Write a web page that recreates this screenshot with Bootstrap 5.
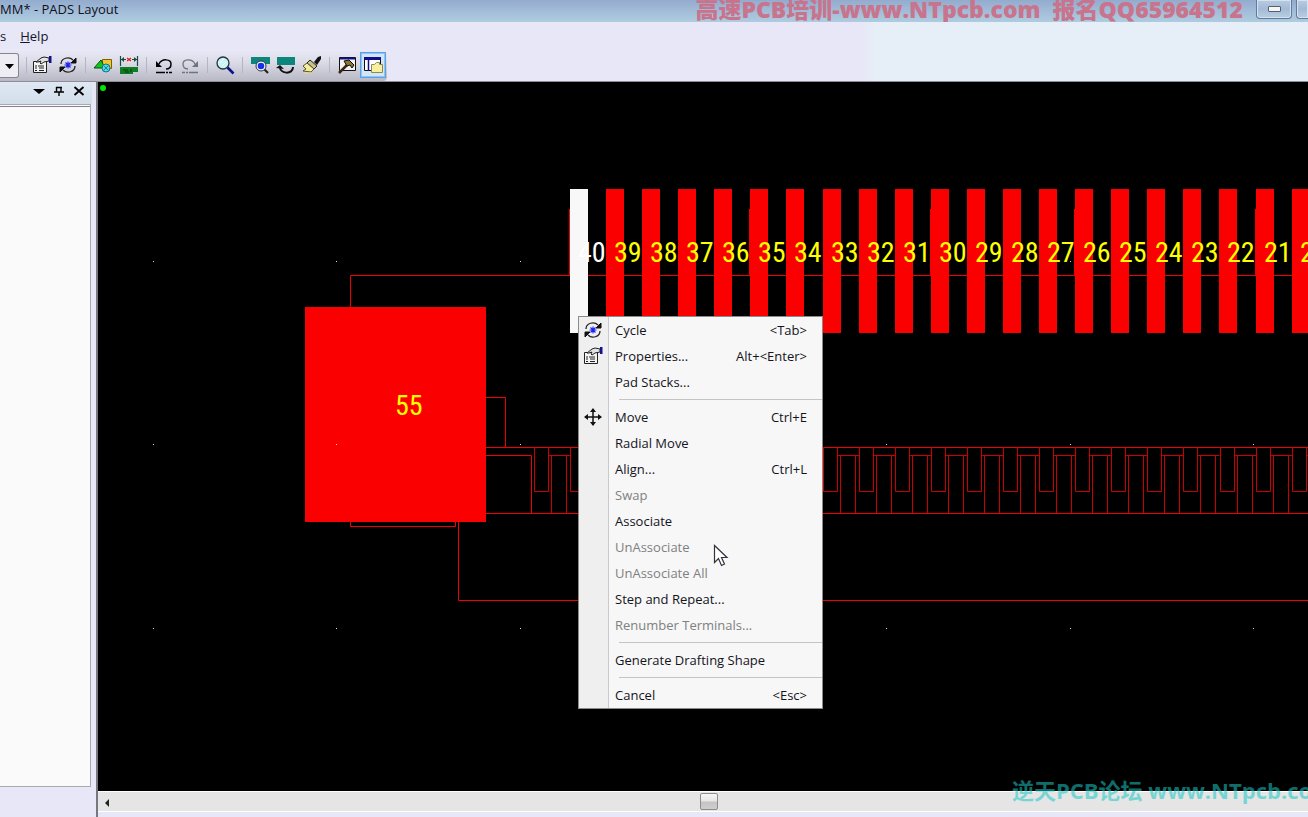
<!DOCTYPE html>
<html lang="en">
<head>
<meta charset="utf-8">
<meta name="viewport" content="width=device-width, initial-scale=1">
<title>PADS Layout</title>
<link href="https://cdn.jsdelivr.net/npm/bootstrap@5.3.0/dist/css/bootstrap.min.css" rel="stylesheet">
<style>
  :root { --chrome: #e8e7f7; --chrome-blue: #e6eff7; }
  body { font-family: "Open Sans", "Noto Sans CJK SC", sans-serif; font-size: 13px; line-height: 16px; color: #101020; background: var(--chrome); }
  .title-bar { height: 22px; background: linear-gradient(#93abcd, #a2bcd8 50%, #afccdf); }
  .title-text { line-height: 18px; }
  .promo { right: 65px; top: -6px; font: 800 23px/30px "Open Sans", "Noto Sans CJK SC", sans-serif; color: #c8748d; white-space: pre; }
  .win-btn { width: 36px; height: 19px; border: 1px solid #63799b; border-top: 0; border-radius: 0 0 4px 4px; background: linear-gradient(#b9cbe0, #a3bad5 50%, #b7cfe2); box-shadow: inset 0 0 0 1px #d5e2ef; }
  .win-next { width: 12px; border-right: 0; border-radius: 0 0 0 4px; }
  .win-btn span { width: 13px; height: 6px; border: 1px solid #555f6e; background: #f5f5f5; border-radius: 1px; }
  .top-chrome { background: linear-gradient(90deg, var(--chrome) 66%, var(--chrome-blue) 67%); border-bottom: 1px solid #8e8e98; }
  .menu-row { height: 27px; gap: 14px; }
  .menu-row a { color: #14142c; text-decoration: none; line-height: 28px; }
  .tool-row { height: 32px; width: 387px; background: linear-gradient(#ebeaf8, #dcdbe8 40%, #b9b9c6); border-radius: 0 0 4px 0; }
  .tool-row select { width: 19px; height: 25px; border: 1px solid #85858f; border-left: 0; border-radius: 0 3px 3px 0; appearance: none; color: transparent;
    background: #ededf3 url("data:image/svg+xml,%3Csvg xmlns='http://www.w3.org/2000/svg' width='9' height='5'%3E%3Cpath d='M0 0h9L4.500 5z'/%3E%3C/svg%3E") no-repeat 5px 10px; }
  .tool-btn { width: 26px; height: 26px; border: 1px solid transparent; background: none; }
  .tool-btn.on { border-color: #5aa2e6; background: #d3e6f8; box-shadow: inset 0 0 0 1px #8fc3f3; }
  .tool-sep { width: 1px; height: 16px; margin: 0 4px; background: #b4b4c2; }
  select + .tool-sep { margin: 0 2px 0 7px; }
  .tool-icon { width: 20px; height: 20px; display: block; }
  .dock { width: 92px; }
  .dock-head { height: 22px; gap: 6px; background: linear-gradient(#dfe8f4, #d3deeb); padding: 2px 5px 0 0; }
  .dock-head button { width: 14px; height: 14px; border: 0; background: none; }
  .dock-head svg { width: 12px; height: 12px; display: block; }
  .dock-body { background: #fafafa; border: 1px solid #a9a9b4; border-left: 0; box-shadow: inset 0 1px 0 #fafafa, inset 0 2px 0 #84848c; margin: 0 1px 30px 0; }
  .work { margin-left: 4px; border-left: 2px solid #77777f; }
  .board { background: #000; min-height: 0; }
  .board text { font: 28px "Liberation Sans Narrow", "Roboto Condensed", "Liberation Sans", sans-serif; fill: #ff0; }
  .scroll-row { height: 21px; background: #e5e5e5; border-top: 1px solid #fff; border-bottom: 1px solid #fff; }
  .scroll-row button { width: 18px; height: 19px; border: 0; background: none; }
  .scroll-thumb { left: calc(50% - 3px); width: 18px; height: 17px; top: 1px; border: 1px solid #8d8d8d; border-radius: 2px; background: linear-gradient(#f6f6f6, #e6e6e6 48%, #c4c4c4 52%, #cecece); }
  .forum { left: 914px; bottom: 12px; font: 700 22px/30px "Open Sans", "Noto Sans CJK SC", sans-serif; white-space: pre; }
  .forum span { color: #1cc8c4; opacity: .55; }
  .page-foot { height: 5px; }
  .ctx { left: 480px; top: 234px; width: 245px; padding: 0; border: 1px solid #8b8b8b; border-radius: 0; font-size: 13px;
    background: linear-gradient(90deg, #efefef 29px, #c9c9cf 29px, #c9c9cf 30px, #f7f7f7 30px); color: #14141c; }
  .ctx .dropdown-item { height: 26px; padding: 0 15px 0 0; display: flex; align-items: center; font-size: 13px; color: #14141c; }
  .ctx .dropdown-item:disabled { color: #808080; }
  .ctx .slot { width: 36px; padding-left: 4px; }
  .ctx .dropdown-divider { margin: 4px 0 4px 40px; border-color: #c4c4c4; opacity: 1; }
  .pointer { left: 615px; top: 462px; width: 16px; height: 24px; z-index: 1001; }
</style>
</head>
<body class="vh-100 d-flex flex-column overflow-hidden">

<svg class="d-none" aria-hidden="true">
  <symbol id="i-props" viewBox="0 0 20 20">
    <path d="M1.500 6.500h13v11h-13z" fill="#f4f4f4" stroke="#222"/>
    <path d="M3 11h2M6 11h6M3 13h2M7 13h5M3 15.500h2M7 15.500h5" stroke="#222" stroke-width="1.200"/>
    <path d="M4 7l5-4 3-1 5 1v3l-5 1-3 2-1-1 1-2-3 1z" fill="#e4e4e4" stroke="#222"/>
    <path d="M17 1h2.500v7H17z" fill="#12128c"/>
  </symbol>
  <symbol id="i-cycle" viewBox="0 0 20 20">
    <path d="M3 9C3 3 11 1 15 5M17 11C17 17 9 19 5 15" fill="none" stroke="#222" stroke-width="1.300"/>
    <path d="M18 3v5h-5zM2 17v-5h5z" fill="#111" stroke="#111"/>
    <path d="M10 6.500v7M6.500 10h7M7.500 7.500l5 5M12.500 7.500l-5 5" stroke="#1a22f0" stroke-width="1.100"/>
  </symbol>
  <symbol id="i-shapes" viewBox="0 0 20 20">
    <path d="M9.500 4.500h9v9h-9z" fill="#f2c632" stroke="#7b6200"/>
    <path d="M1 13l7-8 4 8z" fill="#10c818" stroke="#074f0a"/>
    <circle cx="13" cy="13" r="4" fill="#55d6e6" stroke="#157489"/>
    <path d="M10.500 10.500l5 5M15.500 10.500l-5 5" stroke="#1c8296"/>
  </symbol>
  <symbol id="i-dim" viewBox="0 0 20 20">
    <path d="M1.500 1v10M18.500 1v10M1 4.500h18" stroke="#174c46" stroke-width="1.200" fill="none"/>
    <path d="M5 2L2 4.500 5 7zM15 2l3 2.500L15 7z" fill="#174c46"/>
    <path d="M7 2h6v5H7z" fill="#f8dede"/><path d="M8 3l4 3M12 3L8 6" stroke="#c22" stroke-width="1.400"/>
    <path d="M1 12h18v5h-5v2H1z" fill="#0f7d22"/><path d="M4 15h5M12 14v3M6 17h4" stroke="#063b0d"/>
  </symbol>
  <symbol id="i-undo" viewBox="0 0 20 20">
    <path d="M5 9C8 3 17 4 17 9c0 3-2 5-5 5" fill="none" stroke="currentColor" stroke-width="1.500"/>
    <path d="M2 6v6h6z" fill="currentColor"/><path d="M2 17.500h9M12 17.500h2M15 17.500h3" stroke="currentColor" stroke-width="1.600"/>
  </symbol>
  <symbol id="i-redo" viewBox="0 0 20 20">
    <path d="M15 9C12 3 3 4 3 9c0 3 2 5 5 5" fill="none" stroke="currentColor" stroke-width="1.300"/>
    <path d="M18 6v6h-6z" fill="currentColor"/><path d="M2 17.500h3M6 17.500h2M9 17.500h9" stroke="currentColor" stroke-width="1.600"/>
  </symbol>
  <symbol id="i-zoom" viewBox="0 0 20 20">
    <path d="M12.500 12.500l6 6" stroke="#10108a" stroke-width="2.600"/>
    <circle cx="8" cy="8" r="6" fill="#c9f4f8" stroke="#26333a" stroke-width="1.300"/>
    <path d="M5 8l4-4M7 11l4-4" stroke="#fff"/>
  </symbol>
  <symbol id="i-board" viewBox="0 0 20 20">
    <path d="M1 2h19v7h-19z" fill="#0c857c"/>
    <path d="M14 14l4 4" stroke="#222" stroke-width="2.200"/>
    <circle cx="11" cy="11" r="5" fill="#fff" stroke="#333"/><circle cx="11" cy="11" r="3.300" fill="#1430ee"/>
  </symbol>
  <symbol id="i-redraw" viewBox="0 0 20 20">
    <path d="M1 2h18v8h-18z" fill="#0c857c"/>
    <path d="M4 12c0 7 13 8 13 0" fill="none" stroke="#111" stroke-width="2"/><path d="M0 13l4-3 4 4z" fill="#111"/>
  </symbol>
  <symbol id="i-brush" viewBox="0 0 20 20">
    <path d="M12 7l4-5 3-1v3l-4 6z" fill="#111"/>
    <path d="M8 5l7 6-3 3-7-6z" fill="#c9c389" stroke="#222"/>
    <path d="M5 8l7 6-3 3-8-1 3-2-3-3z" fill="#f4eda0" stroke="#58552b"/><path d="M2 18h7" stroke="#e9dc79"/>
  </symbol>
  <symbol id="i-hammer" viewBox="0 0 20 20">
    <path d="M2.500 2.500h16v13h-16z" fill="#f4f4f4" stroke="#111"/><path d="M3 3.500h15" stroke="#10108a" stroke-width="2"/>
    <path d="M2 18l9-9" stroke="#3a250e" stroke-width="2.500"/><path d="M7 6l5-1 5 5-2 3-2-3-3 1z" fill="#8b7430" stroke="#111"/>
  </symbol>
  <symbol id="i-window" viewBox="0 0 20 20">
    <path d="M1.500 2.500h16v13h-16z" fill="#fff" stroke="#111"/><path d="M1 3.500h17" stroke="#10108a" stroke-width="3"/>
    <path d="M5.500 5v11" stroke="#10108a" stroke-width="1.500"/>
    <path d="M8.500 17.500v-8h3l2-2h3v2h3v8z" fill="#f6f0a0" stroke="#8d8a50"/>
  </symbol>
  <symbol id="i-move" viewBox="0 0 20 20">
    <path d="M10 2v16M2 10h16" stroke="#111" stroke-width="1.500"/>
    <path d="M10 1l3 4H7zM10 19l3-4H7zM1 10l4-3v6zM19 10l-4-3v6z" fill="#111"/>
  </symbol>
</svg>

<header>
  <div class="title-bar position-relative d-flex justify-content-between overflow-hidden">
    <span class="title-text">MM* - PADS Layout</span>
    <span class="promo position-absolute">高速PCB培训-www.NTpcb.com  报名QQ65964512</span>
    <div class="d-flex gap-1">
      <button class="win-btn p-0 d-flex justify-content-center align-items-center" aria-label="Minimize"><span></span></button>
      <button class="win-btn win-next p-0" aria-label="Maximize"></button>
    </div>
  </div>
  <div class="top-chrome">
    <nav class="menu-row d-flex"><a href="#">s</a><a href="#"><u>H</u>elp</a></nav>
    <div class="tool-row d-flex align-items-center" role="toolbar">
      <select aria-label="Layer"><option>Top</option></select>
      <span class="tool-sep"></span>
      <button class="tool-btn p-0 d-flex justify-content-center align-items-center" aria-label="Properties"><svg class="tool-icon"><use href="#i-props"/></svg></button>
      <button class="tool-btn p-0 d-flex justify-content-center align-items-center" aria-label="Cycle"><svg class="tool-icon"><use href="#i-cycle"/></svg></button>
      <span class="tool-sep"></span>
      <button class="tool-btn p-0 d-flex justify-content-center align-items-center" aria-label="Drafting"><svg class="tool-icon"><use href="#i-shapes"/></svg></button>
      <button class="tool-btn p-0 d-flex justify-content-center align-items-center" aria-label="Dimensioning"><svg class="tool-icon"><use href="#i-dim"/></svg></button>
      <span class="tool-sep"></span>
      <button class="tool-btn p-0 d-flex justify-content-center align-items-center" aria-label="Undo"><svg class="tool-icon"><use href="#i-undo"/></svg></button>
      <button class="tool-btn p-0 d-flex justify-content-center align-items-center text-secondary" aria-label="Redo"><svg class="tool-icon"><use href="#i-redo"/></svg></button>
      <span class="tool-sep"></span>
      <button class="tool-btn p-0 d-flex justify-content-center align-items-center" aria-label="Zoom"><svg class="tool-icon"><use href="#i-zoom"/></svg></button>
      <span class="tool-sep"></span>
      <button class="tool-btn p-0 d-flex justify-content-center align-items-center" aria-label="Board"><svg class="tool-icon"><use href="#i-board"/></svg></button>
      <button class="tool-btn p-0 d-flex justify-content-center align-items-center" aria-label="Redraw"><svg class="tool-icon"><use href="#i-redraw"/></svg></button>
      <button class="tool-btn p-0 d-flex justify-content-center align-items-center" aria-label="Clean"><svg class="tool-icon"><use href="#i-brush"/></svg></button>
      <span class="tool-sep"></span>
      <button class="tool-btn p-0 d-flex justify-content-center align-items-center" aria-label="Output window"><svg class="tool-icon"><use href="#i-hammer"/></svg></button>
      <button class="tool-btn on p-0 d-flex justify-content-center align-items-center" aria-label="Project explorer"><svg class="tool-icon"><use href="#i-window"/></svg></button>
    </div>
  </div>
</header>

<main class="d-flex flex-grow-1">
  <aside class="dock flex-shrink-0 d-flex flex-column">
    <div class="dock-head d-flex justify-content-end align-items-start">
      <button class="p-0" aria-label="Options"><svg viewBox="0 0 12 12"><path d="M0 4h12L6 9z"/></svg></button>
      <button class="p-0" aria-label="Pin"><svg viewBox="0 0 12 12"><path d="M3.500 2v5M8 2v5M3 2.500h6M1 7h10M6 7v4" fill="none" stroke="#000" stroke-width="1.400"/></svg></button>
      <button class="p-0" aria-label="Close"><svg viewBox="0 0 12 12"><path d="M1.500 2l9 8M10.500 2l-9 8" stroke="#000" stroke-width="1.800"/></svg></button>
    </div>
    <div class="dock-body flex-grow-1"></div>
  </aside>

  <section class="work flex-grow-1 d-flex flex-column position-relative overflow-hidden">
    <div class="board flex-grow-1 overflow-hidden">
      <svg class="w-100 h-100 d-block" role="img" aria-label="Board layout">
        <!-- shapes are in window coordinates; the group moves them into the work area -->
        <g transform="translate(-98 -82)">
          <g id="traces" fill="none" stroke="#f00000">
            <path d="M350.500 307V275.500H1308"/>
            <path d="M486 397.500H505.500V447"/>
            <path d="M486 447.500H1308M486 513.500H1308"/>
            <path d="M486 455.500H531.500V513"/>
            <path d="M350.500 522V526.500H455.500V522"/>
            <path d="M458.500 522V600.500H1308"/>
          </g>
          <rect x="305" y="307" width="181" height="215" fill="#fb0000"/>
          <g id="pads"></g>
          <g id="grid" fill="#ddd"></g>
          <circle cx="103" cy="88" r="3" fill="#00e800"/>
          <text x="395" y="415">55</text>
          <g id="labels"></g>
        </g>
      </svg>
    </div>
    <div class="scroll-row position-relative d-flex" role="scrollbar" aria-controls="pads" aria-valuenow="50">
      <button class="p-0" aria-label="Scroll left"><svg width="6" height="8" viewBox="0 0 6 8"><path d="M5 0v8L1 4z" fill="#222"/></svg></button>
      <div class="scroll-thumb position-absolute"></div>
    </div>
    <div class="page-foot"></div>
    <div class="forum position-absolute"><span>逆天PCB论坛 www.NTpcb.com</span></div>

    <div class="ctx dropdown-menu show position-absolute" role="menu">
      <button class="dropdown-item" role="menuitem"><span class="slot"><svg class="tool-icon"><use href="#i-cycle"/></svg></span>Cycle<span class="ms-auto">&lt;Tab&gt;</span></button>
      <button class="dropdown-item" role="menuitem"><span class="slot"><svg class="tool-icon"><use href="#i-props"/></svg></span>Properties...<span class="ms-auto">Alt+&lt;Enter&gt;</span></button>
      <button class="dropdown-item" role="menuitem"><span class="slot"></span>Pad Stacks...</button>
      <hr class="dropdown-divider">
      <button class="dropdown-item" role="menuitem"><span class="slot"><svg class="tool-icon"><use href="#i-move"/></svg></span>Move<span class="ms-auto">Ctrl+E</span></button>
      <button class="dropdown-item" role="menuitem"><span class="slot"></span>Radial Move</button>
      <button class="dropdown-item" role="menuitem"><span class="slot"></span>Align...<span class="ms-auto">Ctrl+L</span></button>
      <button class="dropdown-item" role="menuitem" disabled><span class="slot"></span>Swap</button>
      <button class="dropdown-item" role="menuitem"><span class="slot"></span>Associate</button>
      <button class="dropdown-item" role="menuitem" disabled><span class="slot"></span>UnAssociate</button>
      <button class="dropdown-item" role="menuitem" disabled><span class="slot"></span>UnAssociate All</button>
      <button class="dropdown-item" role="menuitem"><span class="slot"></span>Step and Repeat...</button>
      <button class="dropdown-item" role="menuitem" disabled><span class="slot"></span>Renumber Terminals...</button>
      <hr class="dropdown-divider">
      <button class="dropdown-item" role="menuitem"><span class="slot"></span>Generate Drafting Shape</button>
      <hr class="dropdown-divider">
      <button class="dropdown-item" role="menuitem"><span class="slot"></span>Cancel<span class="ms-auto">&lt;Esc&gt;</span></button>
    </div>
    <svg class="pointer position-absolute" viewBox="0 0 16 24" aria-hidden="true"><path d="M1.500 1.500v17l4-4 3 7 3-1.500-3-6.500h5.500z" fill="#fff" stroke="#33333f" stroke-width="1.200"/></svg>
  </section>
</main>

<script src="https://cdn.jsdelivr.net/npm/bootstrap@5.3.0/dist/js/bootstrap.bundle.min.js"></script>
<script>
  const NS = 'http://www.w3.org/2000/svg';
  function add(parent, name, attrs, text) {
    const el = document.createElementNS(NS, name);
    for (const key in attrs) el.setAttribute(key, attrs[key]);
    if (text) el.textContent = text;
    document.getElementById(parent).appendChild(el);
  }
  const pitch = 36.08;
  for (let pin = 40; pin >= 20; pin--) {
    const i = 40 - pin;
    const x = Math.round(570 + i * pitch);
    add('pads', 'rect', { x, y: 189, width: 18, height: 144, fill: pin === 40 ? '#f8f8f8' : '#fb0000' });
    // routed edge beside some of the pads
    if ([0, 5, 10, 14, 19].includes(i)) add('pads', 'rect', { x: x - 1, y: 209, width: 1, height: 67, fill: '#f00000' });
    add('labels', 'text', pin === 40 ? { x: x + 8, y: 262, style: 'fill:#fff' } : { x: x + 8, y: 262 }, String(pin));
  }
  // comb of slots and fingers
  for (let i = 0; i < 22; i++) {
    const u = Math.round(534 + i * pitch) + 0.5;
    add('traces', 'path', { d: `M${u} 447V491.500H${u + 14}V447`, stroke: '#c80000' });
    add('traces', 'path', { d: `M${u + 14} 455.500H${u + 36}M${u + 17} 455V513M${u + 32} 455V513`, stroke: '#c80000' });
  }
  for (let col = 0; col < 7; col++)
    for (const y of [261, 444, 628])
      add('grid', 'rect', { x: Math.round(153 + col * 183.3), y, width: 1, height: 1 });
</script>
</body>
</html>
